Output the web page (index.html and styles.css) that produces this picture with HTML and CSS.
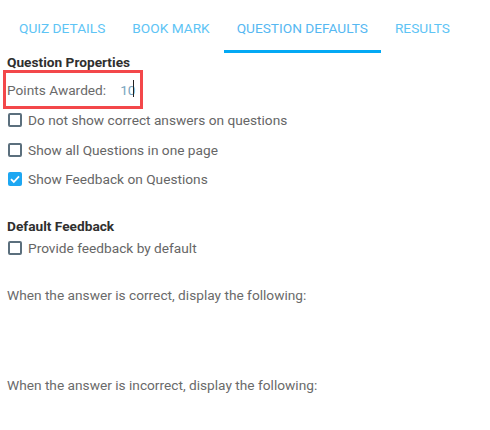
FILE: index.html
```html
<!DOCTYPE html>
<html>
<head>
<meta charset="utf-8">
<link rel="stylesheet" href="styles.css">
</head>
<body>
<div class="page">
  <nav class="tabs">
    <div class="tab">QUIZ DETAILS</div>
    <div class="tab">BOOK MARK</div>
    <div class="tab active">QUESTION DEFAULTS</div>
    <div class="tab">RESULTS</div>
  </nav>
  <h3 class="section-title">Question Properties</h3>
  <div class="points-box">
    <span class="points-label">Points Awarded:</span>
    <span class="points-value">10<span class="caret"></span></span>
  </div>
  <ul class="options">
    <li class="option"><span class="box"></span><span>Do not show correct answers on questions</span></li>
    <li class="option"><span class="box"></span><span>Show all Questions in one page</span></li>
    <li class="option"><span class="box checked"><svg viewBox="0 0 14 14" width="14" height="14"><path d="M3 7.2 L5.8 10 L11 4.3" fill="none" stroke="#fff" stroke-width="1.8"/></svg></span><span>Show Feedback on Questions</span></li>
  </ul>
  <h3 class="section-title feedback-title">Default Feedback</h3>
  <ul class="options tight">
    <li class="option"><span class="box"></span><span>Provide feedback by default</span></li>
  </ul>
  <p class="prompt correct">When the answer is correct, display the following:</p>
  <p class="prompt incorrect">When the answer is incorrect, display the following:</p>
</div>
</body>
</html>
```
FILE: styles.css
```css
* { box-sizing: border-box; }
html, body { margin: 0; padding: 0; background: #fff; }
body {
  font-family: Roboto, "Liberation Sans", Arial, sans-serif;
  font-size: 13.7px;
  line-height: 16px;
  color: #666;
}
.page { width: 490px; height: 430px; overflow: hidden; }
.tabs {
  display: flex;
  gap: 1px;
  padding-left: 6px;
}
.tab {
  padding: 20px 13px 14px;
  line-height: 16px;
  color: #5ec4f5;
  border-bottom: 3px solid transparent;
  white-space: nowrap;
}
.tab.active { border-bottom-color: #03a9f4; color: #56b8f2; }
.section-title {
  margin: 1px 0 0 7px;
  font-size: 13.7px;
  line-height: 16px;
  font-weight: 700;
  color: #2f2f2f;
}
.points-box {
  margin: 0 0 0 3px;
  width: 140px;
  height: 39px;
  border: 3px solid #f3474a;
  display: flex;
  align-items: center;
  padding-left: 1px;
}
.points-label { color: #6a6a6a; }
.points-value {
  margin-left: 14px;
  color: #7aa6c0;
  position: relative;
}
.caret {
  position: absolute;
  right: 2px;
  top: -2px;
  width: 1px;
  height: 17px;
  background: #222;
}
.options {
  list-style: none;
  margin: 1px 0 0;
  padding: 0;
  display: flex;
  flex-direction: column;
  gap: 9.5px;
}
.option {
  display: flex;
  align-items: center;
  height: 20px;
  padding-left: 8px;
  gap: 6px;
}
.box {
  width: 14px;
  height: 14px;
  border: 2px solid #5b6f7d;
  border-radius: 2px;
  flex: none;
  display: flex;
}
.box.checked {
  border: none;
  background: #1da7f2;
}
.feedback-title { margin-top: 29px; }
.options.tight { margin-top: 4px; }
.prompt {
  margin: 0 0 0 7px;
  color: #6a6a6a;
}
.prompt.correct { margin-top: 29px; }
.prompt.incorrect { margin-top: 74px; }
```
